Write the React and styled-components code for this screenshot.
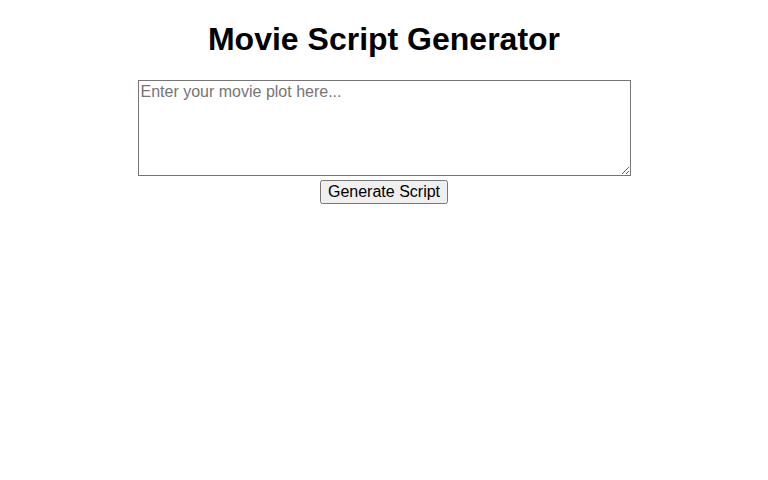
import React, { useState } from 'react'
import styled, { createGlobalStyle } from 'styled-components'

const GlobalStyle = createGlobalStyle`
  body {
    margin: 8px;
    background: #ffffff;
    font-family: "Liberation Sans", Arial, sans-serif;
  }
`

const Container = styled.div`
  text-align: center;
`
const Title = styled.h1`
  font-size: 32px;
  font-weight: bold;
  margin: 13.44px 0 21.44px;
  color: #000;
`
const PlotInput = styled.textarea`
  box-sizing: border-box;
  width: 493px;
  height: 96px;
  padding: 2px;
  border: 1px solid #767676;
  font-family: "Liberation Sans", Arial, sans-serif;
  font-size: 16px;
  vertical-align: baseline;
  &::placeholder {
    color: #757575;
  }
`
const Button = styled.button`
  font-family: "Liberation Sans", Arial, sans-serif;
  font-size: 16px;
  padding: 1px 6px;
  color: #000;
  cursor: pointer;
`

const App = () => {
  const [ plot, setPlot ] = useState('')

  return (
    <Container>
      <GlobalStyle />
      <Title>Movie Script Generator</Title>
      <PlotInput
        placeholder='Enter your movie plot here...'
        value={plot}
        onChange={e => setPlot(e.target.value)}
      />
      <br />
      <Button>Generate Script</Button>
    </Container>
  )
}

export default App
